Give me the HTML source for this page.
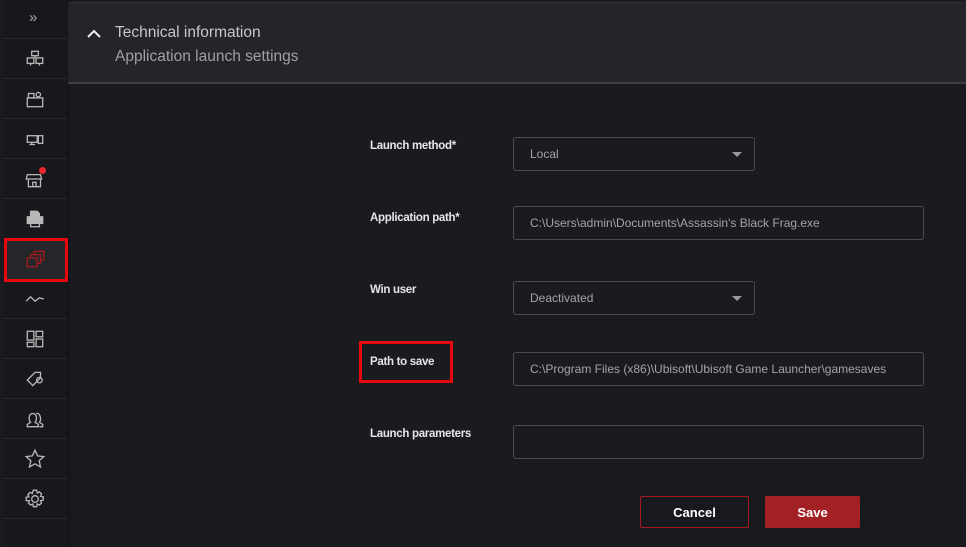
<!DOCTYPE html>
<html><head><style>
body{margin:0;width:966px;height:547px;background:#191b1f;font-family:"Liberation Sans",sans-serif;position:relative;overflow:hidden}
.sb{position:absolute;left:3px;top:0;width:64px;height:547px;background:#16181c}
.sep{position:absolute;left:3px;width:64px;height:1px;background:#26282c}
.ic{position:absolute;left:24px;width:22px;height:22px}
.hdr{position:absolute;left:68px;top:2px;width:898px;height:79px;background:#242528;border-bottom:2px solid #3e3f42;border-top:1px solid #2e2f32}
.lbl{position:absolute;left:370px;color:#e6e6e6;font-size:11.5px;font-weight:bold;letter-spacing:-0.3px}
.in{position:absolute;box-sizing:border-box;border:1px solid #4a4b4e;border-radius:3px;color:#a3a4a6;font-size:12px;padding-left:16px;display:flex;align-items:center}
.arr{position:absolute;right:12px;top:14px;width:0;height:0;border-left:5px solid transparent;border-right:5px solid transparent;border-top:5px solid #9a9b9d}
.btn{position:absolute;top:496px;height:32px;box-sizing:border-box;border-radius:2px;color:#fff;font-size:13px;font-weight:bold;display:flex;align-items:center;justify-content:center}
svg{fill:none;stroke:#b8b8b8;stroke-width:1.2}
</style></head><body>
<div style="position:absolute;left:70px;top:472px;width:896px;height:75px;background:#17191d"></div>
<div class="sb"></div>
<div style="position:absolute;left:67px;top:0;width:3px;height:547px;background:#131518"></div>
<div style="position:absolute;left:29px;top:9px;color:#aaa;font-size:15px">»</div>
<div class="sep" style="top:38px"></div><div class="sep" style="top:78px"></div><div class="sep" style="top:118px"></div><div class="sep" style="top:158px"></div><div class="sep" style="top:198px"></div><div class="sep" style="top:278px"></div><div class="sep" style="top:318px"></div><div class="sep" style="top:358px"></div><div class="sep" style="top:398px"></div><div class="sep" style="top:438px"></div><div class="sep" style="top:478px"></div><div class="sep" style="top:518px"></div>
<svg class="ic" style="top:48px" viewBox="0 0 20 20"><rect x="7" y="3" width="6" height="4"/><rect x="3" y="9" width="6" height="5"/><rect x="11" y="9" width="6" height="5"/><path d="M10 7v2M6 14v2M14 14v2"/></svg>
<svg class="ic" style="top:88px" viewBox="0 0 20 20"><rect x="3" y="9" width="14" height="8"/><rect x="4" y="5" width="5" height="4"/><circle cx="13" cy="6" r="2"/></svg>
<svg class="ic" style="top:128px" viewBox="0 0 20 20"><rect x="3" y="7" width="9" height="6"/><rect x="13" y="7" width="4" height="7"/><path d="M7 13v2M5 15h5"/></svg>
<svg class="ic" style="top:168px" viewBox="0 0 20 20"><path d="M3 6h12l1 4H2zM4 10v7h11v-7M8 17v-4h3v4"/></svg>
<div style="position:absolute;left:39px;top:167px;width:7px;height:7px;border-radius:50%;background:#e8262b"></div>
<svg class="ic" style="top:208px" viewBox="0 0 20 20"><path d="M6 3h6l2 2v3H6z" fill="#b8b8b8"/><rect x="3" y="8" width="14" height="6" fill="#b8b8b8"/><rect x="6" y="13" width="8" height="4"/></svg>
<div style="position:absolute;left:4px;top:238px;width:58px;height:38px;border:3px solid #e5080e;background:#25262a"></div>
<svg class="ic" style="top:248px" viewBox="0 0 20 20"><g stroke="#a3191d"><rect x="3" y="9" width="9" height="8"/><path d="M6 9V6h9v8h-3M9 6V3h9v8h-3"/></g></svg>
<svg class="ic" style="top:288px" viewBox="0 0 20 20"><path d="M2 12l4-4 4 4 4-3 4 1"/></svg>
<svg class="ic" style="top:328px" viewBox="0 0 20 20"><rect x="3" y="3" width="6" height="8"/><rect x="11" y="3" width="6" height="5"/><rect x="3" y="13" width="6" height="4"/><rect x="11" y="10" width="6" height="7"/></svg>
<svg class="ic" style="top:368px" viewBox="0 0 20 20"><path d="M3 11l7-7h5v5l-7 7z"/><circle cx="14" cy="11" r="2.5"/></svg>
<svg class="ic" style="top:408px" viewBox="0 0 20 20"><path d="M3 17v-2l3-2c-2-2-2-8 2-8s4 6 2 8l3 2v2zM11 5c4-1 5 6 3 8l3 2v2h-3"/></svg>
<svg class="ic" style="top:448px" viewBox="0 0 20 20"><path d="M10 2l2.4 5.2 5.6.6-4.2 3.8 1.2 5.6L10 14.4 5 17.2l1.2-5.6L2 7.8l5.6-.6z"/></svg>
<svg class="ic" style="top:488px" viewBox="0 0 20 20"><circle cx="10" cy="10" r="3"/><path d="M8.5 2h3l.5 2.5 2-1 2 2-1 2 2.5.5v3l-2.5.5 1 2-2 2-2-1-.5 2.5h-3l-.5-2.5-2 1-2-2 1-2L2 11.5v-3l2.5-.5-1-2 2-2 2 1z"/></svg>

<div class="hdr"></div>
<svg style="position:absolute;left:86px;top:27px;width:16px;height:12px;stroke:#eee;stroke-width:2" viewBox="0 0 16 12"><path d="M2 10l6-6 6 6"/></svg>
<div style="position:absolute;left:115px;top:24px;color:#c8c8c8;font-size:15.5px">Technical information</div>
<div style="position:absolute;left:115px;top:48px;color:#a0a0a2;font-size:15.5px">Application launch settings</div>

<div class="lbl" style="top:140px">Launch method*</div>
<div class="in" style="left:513px;top:137px;width:242px;height:34px">Local<div class="arr"></div></div>
<div class="lbl" style="top:212px">Application path*</div>
<div class="in" style="left:513px;top:206px;width:411px;height:34px">C:\Users\admin\Documents\Assassin's Black Frag.exe</div>
<div class="lbl" style="top:284px">Win user</div>
<div class="in" style="left:513px;top:281px;width:242px;height:34px">Deactivated<div class="arr"></div></div>
<div style="position:absolute;left:359px;top:341px;width:88px;height:36px;border:3px solid #e5080e"></div>
<div class="lbl" style="top:356px">Path to save</div>
<div class="in" style="left:513px;top:352px;width:411px;height:34px">C:\Program Files (x86)\Ubisoft\Ubisoft Game Launcher\gamesaves</div>
<div class="lbl" style="top:428px">Launch parameters</div>
<div class="in" style="left:513px;top:425px;width:411px;height:34px"></div>

<div class="btn" style="left:640px;width:109px;border:1px solid #a3191d">Cancel</div>
<div class="btn" style="left:765px;width:95px;background:#a32125">Save</div>
</body></html>
